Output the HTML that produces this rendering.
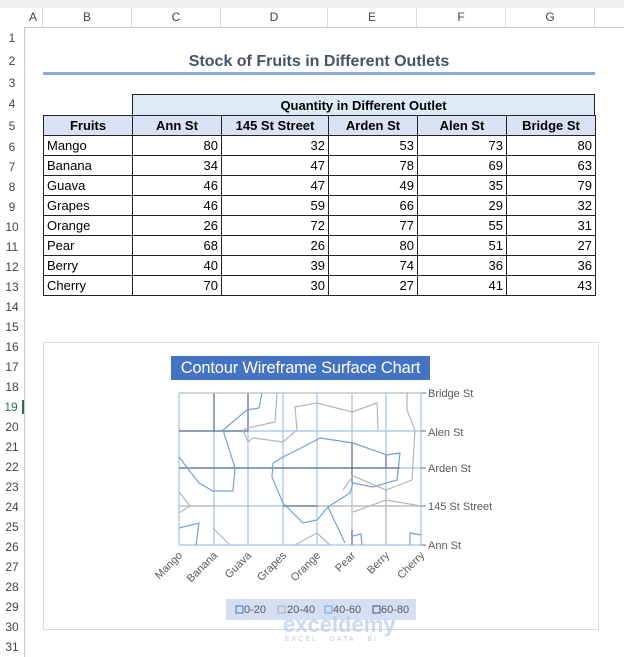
<!DOCTYPE html>
<html><head><meta charset="utf-8"><style>
body{margin:0;width:624px;height:657px;overflow:hidden;background:#fff;font-family:"Liberation Sans",Calibri,sans-serif;position:relative}
.abs{position:absolute}
.ch{position:absolute;top:8px;height:19px;font-size:12px;color:#444;text-align:center;line-height:19px;border-right:1px solid #dadada}
.rn{position:absolute;left:0;width:24px;font-size:12px;color:#444;text-align:center}
table{position:absolute;border-collapse:collapse;font-size:13px}
td{border:1px solid #222;height:19px;padding:0 3px;line-height:19px}
</style></head><body>
<div class="abs" style="left:0;top:0;width:624px;height:8px;background:#f0f0f0"></div>
<div class="abs" style="left:0;top:8px;width:624px;height:19px;background:#fff;border-bottom:1px solid #c8c8c8"></div>
<div class="abs" style="left:0;top:27px;width:24px;height:630px;background:#fff;border-right:1px solid #c8c8c8"></div>
<div class="ch" style="left:24px;width:18px">A</div>
<div class="ch" style="left:43px;width:88px">B</div>
<div class="ch" style="left:132px;width:88px">C</div>
<div class="ch" style="left:221px;width:106px">D</div>
<div class="ch" style="left:328px;width:88px">E</div>
<div class="ch" style="left:417px;width:88px">F</div>
<div class="ch" style="left:506px;width:88px">G</div>
<div class="rn" style="top:31px">1</div><div class="rn" style="top:54px">2</div><div class="rn" style="top:76px">3</div><div class="rn" style="top:97px">4</div><div class="rn" style="top:119px">5</div>
<div class="rn" style="top:140px">6</div><div class="rn" style="top:160px">7</div><div class="rn" style="top:180px">8</div><div class="rn" style="top:200px">9</div><div class="rn" style="top:220px">10</div><div class="rn" style="top:240px">11</div><div class="rn" style="top:260px">12</div><div class="rn" style="top:280px">13</div><div class="rn" style="top:300px">14</div><div class="rn" style="top:320px">15</div><div class="rn" style="top:340px">16</div><div class="rn" style="top:360px">17</div><div class="rn" style="top:380px">18</div><div class="rn" style="top:400px;color:#217346;border-right:2px solid #217346;width:22px">19</div><div class="rn" style="top:420px">20</div><div class="rn" style="top:440px">21</div><div class="rn" style="top:460px">22</div><div class="rn" style="top:480px">23</div><div class="rn" style="top:500px">24</div><div class="rn" style="top:520px">25</div><div class="rn" style="top:540px">26</div><div class="rn" style="top:560px">27</div><div class="rn" style="top:580px">28</div><div class="rn" style="top:600px">29</div><div class="rn" style="top:620px">30</div><div class="rn" style="top:640px">31</div>

<div class="abs" style="left:43px;top:53px;width:552px;text-align:center;font-size:16px;font-weight:bold;color:#44546a">Stock of Fruits in Different Outlets</div>
<div class="abs" style="left:43px;top:72px;width:552px;height:3px;background:#8ea9db"></div>

<table style="left:132px;top:94px;width:463px"><tr><td style="background:#ddebf7;text-align:center;font-weight:bold;height:20px">Quantity in Different Outlet</td></tr></table>
<table style="left:43px;top:115px">
<tr style="background:#d9e1f2;font-weight:bold;text-align:center"><td style="width:82px">Fruits</td><td style="width:82px">Ann St</td><td style="width:100px">145 St Street</td><td style="width:82px">Arden St</td><td style="width:82px">Alen St</td><td style="width:82px">Bridge St</td></tr>
<tr><td>Mango</td><td align=right>80</td><td align=right>32</td><td align=right>53</td><td align=right>73</td><td align=right>80</td></tr>
<tr><td>Banana</td><td align=right>34</td><td align=right>47</td><td align=right>78</td><td align=right>69</td><td align=right>63</td></tr>
<tr><td>Guava</td><td align=right>46</td><td align=right>47</td><td align=right>49</td><td align=right>35</td><td align=right>79</td></tr>
<tr><td>Grapes</td><td align=right>46</td><td align=right>59</td><td align=right>66</td><td align=right>29</td><td align=right>32</td></tr>
<tr><td>Orange</td><td align=right>26</td><td align=right>72</td><td align=right>77</td><td align=right>55</td><td align=right>31</td></tr>
<tr><td>Pear</td><td align=right>68</td><td align=right>26</td><td align=right>80</td><td align=right>51</td><td align=right>27</td></tr>
<tr><td>Berry</td><td align=right>40</td><td align=right>39</td><td align=right>74</td><td align=right>36</td><td align=right>36</td></tr>
<tr><td>Cherry</td><td align=right>70</td><td align=right>30</td><td align=right>27</td><td align=right>41</td><td align=right>43</td></tr>
</table>

<div class="abs" style="left:43px;top:342px;width:554px;height:286px;border:1px solid #d9d9d9"></div>
<div class="abs" style="left:171px;top:356px;width:259px;height:24px;background:#4472c4;color:#fff;font-size:16.5px;line-height:24px;text-align:center;white-space:nowrap;overflow:hidden;letter-spacing:-0.2px">Contour Wireframe Surface Chart</div>
<svg class="abs" style="left:0;top:0" width="624" height="657">
<g fill="none" stroke-width="1.2">
<g stroke="#9dc3e6">
<line x1="179" y1="393" x2="179" y2="545"/><line x1="214" y1="393" x2="214" y2="545"/><line x1="248" y1="393" x2="248" y2="545"/><line x1="283" y1="393" x2="283" y2="545"/><line x1="317" y1="393" x2="317" y2="545"/><line x1="352" y1="393" x2="352" y2="545"/><line x1="386" y1="393" x2="386" y2="545"/><line x1="421" y1="393" x2="421" y2="545"/>
<line x1="179" y1="431" x2="421" y2="431"/><line x1="179" y1="468" x2="421" y2="468"/><line x1="179" y1="506" x2="421" y2="506"/><line x1="179" y1="545" x2="421" y2="545"/>
</g>
<g stroke="#5b6f95"><line x1="214" y1="393" x2="214" y2="431"/><line x1="248" y1="393" x2="248" y2="431"/><line x1="179" y1="431" x2="248" y2="431"/><line x1="179" y1="468" x2="400" y2="468"/><line x1="283" y1="506" x2="320" y2="506"/><line x1="352" y1="443" x2="352" y2="483"/><line x1="386" y1="455" x2="386" y2="468"/><line x1="352" y1="530" x2="352" y2="545"/></g>
<g stroke="#bbb"><line x1="179" y1="393" x2="421" y2="393"/><line x1="317" y1="506" x2="421" y2="506"/><line x1="179" y1="506" x2="214" y2="506"/><line x1="386" y1="490" x2="386" y2="545"/></g>
<g stroke="#6fa3d8">
<polyline points="262,393 259,408 247,410 223,430 235,468 233,491 213,491 199,483 179,457"/>
<polyline points="273,463 283,457 303,447 320,438 353,443 387,455 400,453 397,480 373,487 353,483 350,493 328,507 345,543"/>
<polyline points="273,463 272,477 283,503 303,523 317,520 328,507"/>
<polyline points="179,528 199,523 196,545"/><polyline points="353,536 361,534 362,545"/><polyline points="410,545 410,533 421,535"/>
</g>
<g stroke="#b5b5b5">
<polyline points="277,393 275,422 248,428 243,430 248,442 253,438 283,442 297,430 295,407 317,403 352,412 377,403 378,430"/>
<polyline points="407,393 407,410 415,430 412,480 386,490 353,476 343,490"/>
<polyline points="179,492 190,506 179,513"/><polyline points="213,528 230,545"/><polyline points="295,545 317,533 330,545"/><polyline points="353,512 386,500 421,506"/>
</g>
<g stroke="#888"><line x1="421" y1="393" x2="426" y2="393"/><line x1="421" y1="431" x2="426" y2="431"/><line x1="421" y1="468" x2="426" y2="468"/><line x1="421" y1="506" x2="426" y2="506"/><line x1="421" y1="545" x2="426" y2="545"/></g>
</g>
<g font-size="11" fill="#595959" font-family="Liberation Sans,sans-serif">
<text x="428" y="397">Bridge St</text><text x="428" y="436">Alen St</text><text x="428" y="472">Arden St</text><text x="428" y="510">145 St Street</text><text x="428" y="549">Ann St</text>
<g text-anchor="end">
<text transform="translate(183,556) rotate(-45)">Mango</text><text transform="translate(218,556) rotate(-45)">Banana</text><text transform="translate(252,556) rotate(-45)">Guava</text><text transform="translate(287,556) rotate(-45)">Grapes</text><text transform="translate(321,556) rotate(-45)">Orange</text><text transform="translate(356,556) rotate(-45)">Pear</text><text transform="translate(390,556) rotate(-45)">Berry</text><text transform="translate(425,556) rotate(-45)">Cherry</text>
</g>
</g>
<rect x="226" y="599" width="190" height="21" fill="#d5dff3"/>
<g font-size="11" fill="#595959" font-family="Liberation Sans,sans-serif">
<rect x="236" y="606" width="7" height="7" fill="none" stroke="#4472c4"/><text x="244" y="613">0-20</text>
<rect x="278" y="606" width="7" height="7" fill="none" stroke="#aaa"/><text x="287" y="613">20-40</text>
<rect x="325" y="606" width="7" height="7" fill="none" stroke="#6fa3d8"/><text x="333" y="613">40-60</text>
<rect x="373" y="606" width="7" height="7" fill="none" stroke="#44546a"/><text x="381" y="613">60-80</text>
</g>
<text x="283" y="632" font-size="22" font-weight="bold" fill="#b8c8ee" opacity="0.7" font-family="Liberation Sans,sans-serif">exceldemy</text>
<text x="285" y="641" font-size="7" fill="#c0c8d8" letter-spacing="2" font-family="Liberation Sans,sans-serif">EXCEL · DATA · BI</text>
</svg>
</body></html>
